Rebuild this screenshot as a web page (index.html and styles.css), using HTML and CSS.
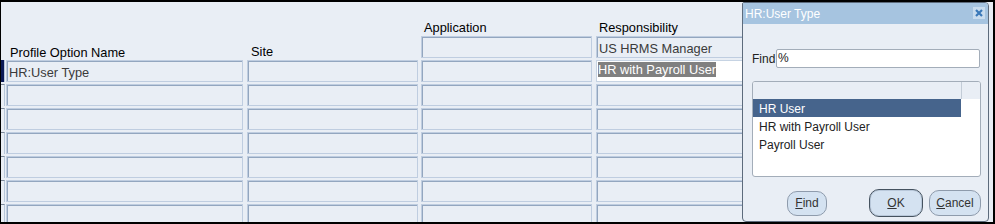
FILE: index.html
```html
<!DOCTYPE html>
<html>
<head>
<meta charset="utf-8">
<link rel="stylesheet" href="styles.css">
</head>
<body>
<div class="app">
  <div class="form">
    <div class="row row-top">
      <div class="ind blank"></div>
      <div class="c1"></div>
      <div class="c2"></div>
      <div class="c3 lbl lbl-top">Application</div>
      <div class="c4 lbl lbl-top">Responsibility</div>
    </div>
    <div class="row">
      <div class="ind blank"></div>
      <div class="c1 lbl lbl-name">Profile Option Name</div>
      <div class="c2 lbl lbl-site">Site</div>
      <div class="c3 fld"></div>
      <div class="c4 fld">US HRMS Manager</div>
    </div>
    <div class="row">
      <div class="ind active"></div>
      <div class="c1 fld">HR:User Type</div>
      <div class="c2 fld"></div>
      <div class="c3 fld"></div>
      <div class="c4 fld edit"><span class="sel">HR with Payroll User</span></div>
    </div>
    <div class="row">
      <div class="ind"></div>
      <div class="c1 fld"></div><div class="c2 fld"></div><div class="c3 fld"></div><div class="c4 fld"></div>
    </div>
    <div class="row">
      <div class="ind"></div>
      <div class="c1 fld"></div><div class="c2 fld"></div><div class="c3 fld"></div><div class="c4 fld"></div>
    </div>
    <div class="row">
      <div class="ind"></div>
      <div class="c1 fld"></div><div class="c2 fld"></div><div class="c3 fld"></div><div class="c4 fld"></div>
    </div>
    <div class="row">
      <div class="ind"></div>
      <div class="c1 fld"></div><div class="c2 fld"></div><div class="c3 fld"></div><div class="c4 fld"></div>
    </div>
    <div class="row">
      <div class="ind"></div>
      <div class="c1 fld"></div><div class="c2 fld"></div><div class="c3 fld"></div><div class="c4 fld"></div>
    </div>
    <div class="row">
      <div class="ind"></div>
      <div class="c1 fld"></div><div class="c2 fld"></div><div class="c3 fld"></div><div class="c4 fld"></div>
    </div>
  </div>

  <div class="dialog">
    <div class="titlebar">
      <span class="title">HR:User Type</span>
      <span class="close">
        <svg width="12" height="12" viewBox="0 0 12 12">
          <rect x="0" y="0" width="12" height="12" fill="#c9dcee"/>
          <path d="M3 3 L9 9 M9 3 L3 9" stroke="#3a78b8" stroke-width="2.2" stroke-linecap="butt"/>
        </svg>
      </span>
    </div>
    <div class="dbody">
      <div class="findrow">
        <span class="findlbl">Find</span>
        <div class="findinput">%</div>
      </div>
      <div class="list">
        <div class="lhead">
          <div class="lhead-main"></div>
          <div class="lhead-side"></div>
        </div>
        <div class="litem selected">HR User</div>
        <div class="litem">HR with Payroll User</div>
        <div class="litem">Payroll User</div>
      </div>
      <div class="buttons">
        <div class="btn btn-find"><u>F</u>ind</div>
        <div class="btn btn-ok"><u>O</u>K</div>
        <div class="btn btn-cancel"><u>C</u>ancel</div>
      </div>
    </div>
  </div>
</div>
</body>
</html>
```

FILE: styles.css
```css
html, body {
  margin: 0;
  padding: 0;
  background: #e9eef5;
}

.app {
  position: relative;
  width: 995px;
  height: 224px;
  box-sizing: border-box;
  border-top: 2px solid #000;
  border-left: 1px solid #000;
  border-right: 2px solid #000;
  border-bottom: 2px solid #000;
  background: #e9eef5;
  overflow: hidden;
  font-family: "Liberation Sans", Arial, sans-serif;
  font-size: 12.8px;
  color: #000;
}

.form {
  display: flex;
  flex-direction: column;
}

.row {
  display: flex;
  height: 22px;
  margin-bottom: 2px;
  flex-shrink: 0;
}

.row > div {
  box-sizing: border-box;
  flex-shrink: 0;
}

.row-top {
  height: 34px;
  margin-bottom: 0;
}

.ind {
  width: 4px;
  margin-right: 1px;
  border-right: 1px solid #b7c7da;
  border-top: 1px solid #7d8999;
}

.ind.blank {
  border: none;
}

.ind.active {
  background: #0b1a56;
  border-top: none;
}

.c1 { width: 237px; margin-right: 4px; }
.c2 { width: 171px; margin-right: 3px; }
.c3 { width: 171px; margin-right: 4px; }
.c4 { width: 171px; }

.lbl {
  white-space: nowrap;
  line-height: 15px;
}

.lbl-top {
  align-self: flex-end;
  margin-bottom: 1px;
  padding-left: 3px;
}

.lbl-name {
  padding-top: 9px;
  padding-left: 4px;
}

.lbl-site {
  padding-top: 8px;
  padding-left: 4px;
}

.fld {
  border: 1px solid #bfcde0;
  box-shadow: inset 1px 1px 0 #93a6bf;
  padding: 2px 2px 0 2px;
  line-height: 19px;
  color: #3a3a3a;
  white-space: nowrap;
  overflow: hidden;
}

.fld.edit {
  background: #fff;
  box-shadow: none;
  border-color: #c6d3e3;
  padding: 1px 0 0 1px;
  line-height: 15px;
}

.sel {
  background: #808080;
  color: #fff;
}

/* Dialog */
.dialog {
  position: absolute;
  left: 741px;
  top: 0;
  width: 247px;
  bottom: 0;
  box-sizing: border-box;
  border: 1px solid #5d6b7c;
  border-radius: 2px 4px 4px 4px;
  background: #e9eef5;
  font-size: 12px;
  display: flex;
  flex-direction: column;
  overflow: hidden;
}

.titlebar {
  height: 21px;
  background: #a6c4e0;
  display: flex;
  justify-content: space-between;
  align-items: flex-start;
  flex-shrink: 0;
}

.title {
  color: #fff;
  line-height: 15px;
  padding-top: 4px;
  padding-left: 2px;
}

.close {
  margin-top: 4px;
  margin-right: 3px;
  width: 12px;
  height: 12px;
  display: block;
}

.close svg {
  display: block;
}

.dbody {
  display: flex;
  flex-direction: column;
  padding-left: 9px;
}

.findrow {
  display: flex;
  align-items: center;
  margin-top: 25px;
  height: 19px;
}

.findlbl {
  width: 24px;
  line-height: 14px;
  color: #222;
}

.findinput {
  width: 204px;
  height: 19px;
  box-sizing: border-box;
  background: #fff;
  border: 1px solid #a3adb9;
  border-radius: 2px;
  padding-left: 1px;
  line-height: 17px;
  color: #222;
}

.list {
  margin-top: 13px;
  width: 229px;
  height: 96px;
  box-sizing: border-box;
  border: 1px solid #a3adb9;
  border-radius: 3px;
  background: #fff;
  overflow: hidden;
}

.lhead {
  display: flex;
  height: 17px;
  background: #e9eef5;
}

.lhead-main {
  width: 208px;
  border-right: 1px solid #c3ccd7;
}

.lhead-side {
  flex: 1;
}

.litem {
  width: 208px;
  height: 18px;
  box-sizing: border-box;
  padding-top: 2px;
  padding-left: 6px;
  line-height: 16px;
  color: #222;
  white-space: nowrap;
}

.litem.selected {
  background: #46648c;
  color: #fff;
}

.buttons {
  display: flex;
  align-items: center;
  margin-top: 12px;
  padding-left: 35px;
  height: 28px;
}

.btn {
  box-sizing: border-box;
  border: 1px solid #8e9bac;
  border-radius: 10px;
  background: #d4e2f1;
  color: #333;
  text-align: center;
  display: flex;
  align-items: center;
  justify-content: center;
  line-height: 14px;
}

.btn-find {
  width: 40px;
  height: 25px;
}

.btn-ok {
  width: 54px;
  height: 28px;
  margin-left: 42px;
  border: 1px solid #45525f;
  box-shadow: inset 0 0 0 1px #b9c8da;
}

.btn-cancel {
  width: 52px;
  height: 26px;
  margin-left: 6px;
}
```
